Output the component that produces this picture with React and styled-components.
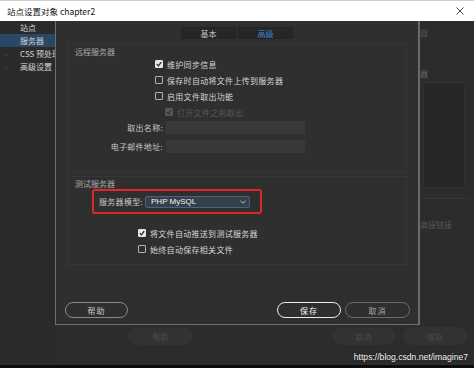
import React from 'react';
import styled, { createGlobalStyle } from 'styled-components';

const GlobalStyle = createGlobalStyle`
  html, body {
    margin: 0;
    padding: 0;
    background: #2c2c2c;
  }
  body {
    font-family: "Noto Sans CJK SC", "Noto Sans", sans-serif;
  }
`;

const Window = styled.div`
  position: relative;
  width: 474px;
  height: 368px;
  display: flex;
  flex-direction: column;
  overflow: hidden;
  background: #2c2c2c;
`;

const TitleBar = styled.div`
  height: 21px;
  flex: none;
  box-sizing: border-box;
  display: flex;
  align-items: center;
  justify-content: space-between;
  padding: 0 10px 0 7px;
  background: #ffffff;
  border-top: 1px solid #cfcfcf;
  font-size: 8.5px;
  color: #111;
`;

const CloseIcon = styled.svg`
  width: 8px;
  height: 8px;
`;

const Main = styled.div`
  position: relative;
  flex: 1;
  display: flex;
  background: #2c2c2c;
`;

const Sidebar = styled.div`
  width: 55px;
  flex: none;
  display: flex;
  flex-direction: column;
  background: #2a2a2a;
`;

const SideItem = styled.div`
  height: 13px;
  display: flex;
  align-items: center;
  padding-left: 5px;
  font-size: 8px;
  white-space: nowrap;
  overflow: hidden;
  color: #d4d4d4;
  background: ${(p) => (p.$active ? '#2b4766' : 'transparent')};
`;

const SideArrow = styled.span`
  width: 15px;
  flex: none;
  font-size: 7px;
  color: #6c6c6c;
`;

const BackPanel = styled.div`
  flex: 1;
  display: flex;
  flex-direction: column;
`;

const BackTop = styled.div`
  flex: 1;
  display: flex;
  justify-content: flex-end;
`;

const BackSide = styled.div`
  width: 54px;
  display: flex;
  flex-direction: column;
  padding-top: 6px;
  box-sizing: border-box;
`;

const FaintText = styled.div`
  font-size: 8px;
  color: ${(p) => p.$color || '#5e5e5e'};
  height: ${(p) => p.$h || 12}px;
  padding-left: ${(p) => p.$pl || 0}px;
  margin-top: ${(p) => p.$mt || 0}px;
  white-space: nowrap;
  overflow: hidden;
`;

const FaintBox = styled.div`
  margin: 2px 9px 0 3px;
  height: 104px;
  background: #272727;
  border: 1px solid #303030;
`;

const FaintLine = styled.div`
  margin: 10px 4px 0 0;
  height: 1px;
  background: #363636;
`;

const BackFooter = styled.div`
  height: 28px;
  display: flex;
  align-items: flex-start;
  padding: 0 7px 10px 73px;
  gap: 8px;
`;

const FadedButton = styled.div`
  width: ${(p) => p.$w}px;
  height: 18px;
  border-radius: 9px;
  background: #323232;
  color: #4c4c4c;
  font-size: 8px;
  display: flex;
  align-items: center;
  justify-content: center;
`;

const Spacer = styled.div`
  flex: 1;
`;

const Dialog = styled.div`
  position: absolute;
  left: 55px;
  top: 0;
  width: 365px;
  height: 304px;
  box-sizing: border-box;
  display: flex;
  flex-direction: column;
  background: #2f2f2f;
  border-left: 1px solid #6e6e6e;
  border-right: 2px solid #6a6a6a;
  border-bottom: 1px solid #707070;
`;

const Tabs = styled.div`
  display: flex;
  justify-content: center;
  gap: 2px;
  margin-top: 6px;
`;

const Tab = styled.div`
  width: 55px;
  height: 12px;
  box-sizing: border-box;
  display: flex;
  align-items: center;
  justify-content: center;
  font-size: 8px;
  background: #262626;
  border: 1px solid #242424;
  color: ${(p) => (p.$active ? '#3d84c9' : '#c4c4c4')};
`;

const Group = styled.div`
  margin: ${(p) => p.$mt}px 0 0 11px;
  width: 340px;
  height: ${(p) => p.$h}px;
  box-sizing: border-box;
  border: 1px solid #373737;
  padding: 3px 0 0 0;
  display: flex;
  flex-direction: column;
`;

const Legend = styled.div`
  height: 8px;
  line-height: 8px;
  padding-left: 7px;
  font-size: 8px;
  color: #a9a9a9;
`;

const CheckList = styled.div`
  display: flex;
  flex-direction: column;
  margin-top: ${(p) => p.$mt || 0}px;
  padding-left: ${(p) => p.$pl}px;
`;

const CheckRow = styled.div`
  height: 16px;
  display: flex;
  align-items: center;
  gap: 4px;
  padding-left: ${(p) => p.$indent || 0}px;
  font-size: 8px;
  letter-spacing: 0.3px;
  color: ${(p) => (p.$disabled ? '#595959' : '#d6d6d6')};
`;

const Box = styled.span`
  width: 8px;
  height: 8px;
  box-sizing: border-box;
  flex: none;
  display: flex;
  align-items: center;
  justify-content: center;
  border: 1px solid ${(p) => (p.$disabled ? '#555' : p.$checked ? '#e6e6e6' : '#b4b4b4')};
  background: ${(p) => (p.$disabled ? '#555' : p.$checked ? '#e6e6e6' : 'transparent')};
  border-radius: 1px;
`;

const FieldRow = styled.div`
  height: 13px;
  display: flex;
  align-items: center;
  margin-top: ${(p) => p.$mt}px;
`;

const FieldLabel = styled.div`
  width: 98px;
  text-align: right;
  padding-right: 3px;
  box-sizing: border-box;
  font-size: 8px;
  letter-spacing: 0.3px;
  color: #c8c8c8;
`;

const TextInput = styled.div`
  width: 139px;
  height: 13px;
  background: #393939;
  border-radius: 1px;
`;

const Highlight = styled.div`
  margin: 1px 0 0 24px;
  width: 170px;
  height: 25px;
  box-sizing: border-box;
  border: 2px solid #e0262a;
  border-radius: 3px;
  display: flex;
  align-items: center;
  padding-left: 5px;
  gap: 2px;
`;

const SelectLabel = styled.div`
  font-size: 8px;
  letter-spacing: 0.3px;
  color: #c8c8c8;
  white-space: nowrap;
`;

const Select = styled.div`
  width: 105px;
  height: 12px;
  box-sizing: border-box;
  display: flex;
  align-items: center;
  justify-content: space-between;
  padding: 0 3px 0 5px;
  background: #36404c;
  border: 1px solid #4a6480;
  border-radius: 2px;
  font-family: "Liberation Sans", Arial, sans-serif;
  font-size: 8px;
  color: #f2f2f2;
`;

const Footer = styled.div`
  margin-top: auto;
  display: flex;
  align-items: center;
  gap: 4px;
  padding: 0 8px 6px 9px;
`;

const PillButton = styled.div`
  width: ${(p) => p.$w}px;
  height: 16px;
  box-sizing: border-box;
  border-radius: 8px;
  display: flex;
  align-items: center;
  justify-content: center;
  font-size: 8px;
  letter-spacing: 1px;
  border: ${(p) => (p.$primary ? '1.5px solid #ececec' : `1px solid ${p.$border || '#8a8a8a'}`)};
  color: ${(p) => (p.$primary ? '#f4f4f4' : p.$color || '#c8c8c8')};
`;

const BottomStrip = styled.div`
  height: 3px;
  flex: none;
  background: #0d0d0d;
`;

const Watermark = styled.div`
  position: absolute;
  right: 6px;
  bottom: 6px;
  font-family: "Liberation Sans", Arial, sans-serif;
  font-size: 8.6px;
  color: #f4f4f4;
  text-shadow: 0 0 2px rgba(0, 0, 0, 0.6);
`;

function Check({ checked, disabled }) {
  return (
    <Box $checked={checked} $disabled={disabled}>
      {checked && (
        <svg width="6" height="6" viewBox="0 0 6 6">
          <path d="M0.8 3.2 L2.4 4.8 L5.2 1.2" fill="none" stroke={disabled ? '#333' : '#1e1e1e'} strokeWidth="1.2" />
        </svg>
      )}
    </Box>
  );
}

function CheckItem({ label, checked, disabled, indent }) {
  return (
    <CheckRow $disabled={disabled} $indent={indent}>
      <Check checked={checked} disabled={disabled} />
      <span>{label}</span>
    </CheckRow>
  );
}

export default function App() {
  return (
    <>
      <GlobalStyle />
      <Window>
        <TitleBar>
          <span>站点设置对象 chapter2</span>
          <CloseIcon viewBox="0 0 8 8">
            <path d="M0.5 0.5 L7.5 7.5 M7.5 0.5 L0.5 7.5" stroke="#333" strokeWidth="0.9" />
          </CloseIcon>
        </TitleBar>
        <Main>
          <Sidebar>
            <SideItem><SideArrow />站点</SideItem>
            <SideItem $active><SideArrow />服务器</SideItem>
            <SideItem><SideArrow>›</SideArrow>CSS 预处理</SideItem>
            <SideItem><SideArrow>›</SideArrow>高级设置</SideItem>
          </Sidebar>
          <BackPanel>
            <BackTop>
              <BackSide>
                <FaintText $color="#5a5a5a">自</FaintText>
                <FaintText $color="#6a6a6a" $mt={29}>器</FaintText>
                <FaintBox />
                <FaintLine />
                <FaintText $mt={20} $color="#555">肩接链接</FaintText>
              </BackSide>
            </BackTop>
            <BackFooter>
              <FadedButton $w={65}>帮助</FadedButton>
              <Spacer />
              <FadedButton $w={63}>取消</FadedButton>
              <FadedButton $w={64}>保存</FadedButton>
            </BackFooter>
          </BackPanel>

          <Dialog>
            <Tabs>
              <Tab>基本</Tab>
              <Tab $active>高级</Tab>
            </Tabs>

            <Group $mt={5} $h={128}>
              <Legend>远程服务器</Legend>
              <CheckList $pl={87}>
                <CheckItem checked label="维护同步信息" />
                <CheckItem label="保存时自动将文件上传到服务器" />
                <CheckItem label="启用文件取出功能" />
                <CheckItem checked disabled indent={10} label="打开文件之前取出" />
              </CheckList>
              <FieldRow $mt={1}>
                <FieldLabel>取出名称:</FieldLabel>
                <TextInput />
              </FieldRow>
              <FieldRow $mt={6}>
                <FieldLabel>电子邮件地址:</FieldLabel>
                <TextInput />
              </FieldRow>
            </Group>

            <Group $mt={4} $h={89}>
              <Legend>测试服务器</Legend>
              <Highlight>
                <SelectLabel>服务器模型:</SelectLabel>
                <Select>
                  <span>PHP MySQL</span>
                  <svg width="6" height="4" viewBox="0 0 6 4">
                    <path d="M0.5 0.8 L3 3.2 L5.5 0.8" fill="none" stroke="#cfcfcf" strokeWidth="0.9" />
                  </svg>
                </Select>
              </Highlight>
              <CheckList $pl={70} $mt={11}>
                <CheckItem checked label="将文件自动推送到测试服务器" />
                <CheckItem label="始终自动保存相关文件" />
              </CheckList>
            </Group>

            <Footer>
              <PillButton $w={63}>帮助</PillButton>
              <Spacer />
              <PillButton $w={64} $primary>保存</PillButton>
              <PillButton $w={65} $border="#6a6a6a" $color="#a8a8a8">取消</PillButton>
            </Footer>
          </Dialog>
        </Main>
        <BottomStrip />
        <Watermark>https://blog.csdn.net/imagine7</Watermark>
      </Window>
    </>
  );
}
